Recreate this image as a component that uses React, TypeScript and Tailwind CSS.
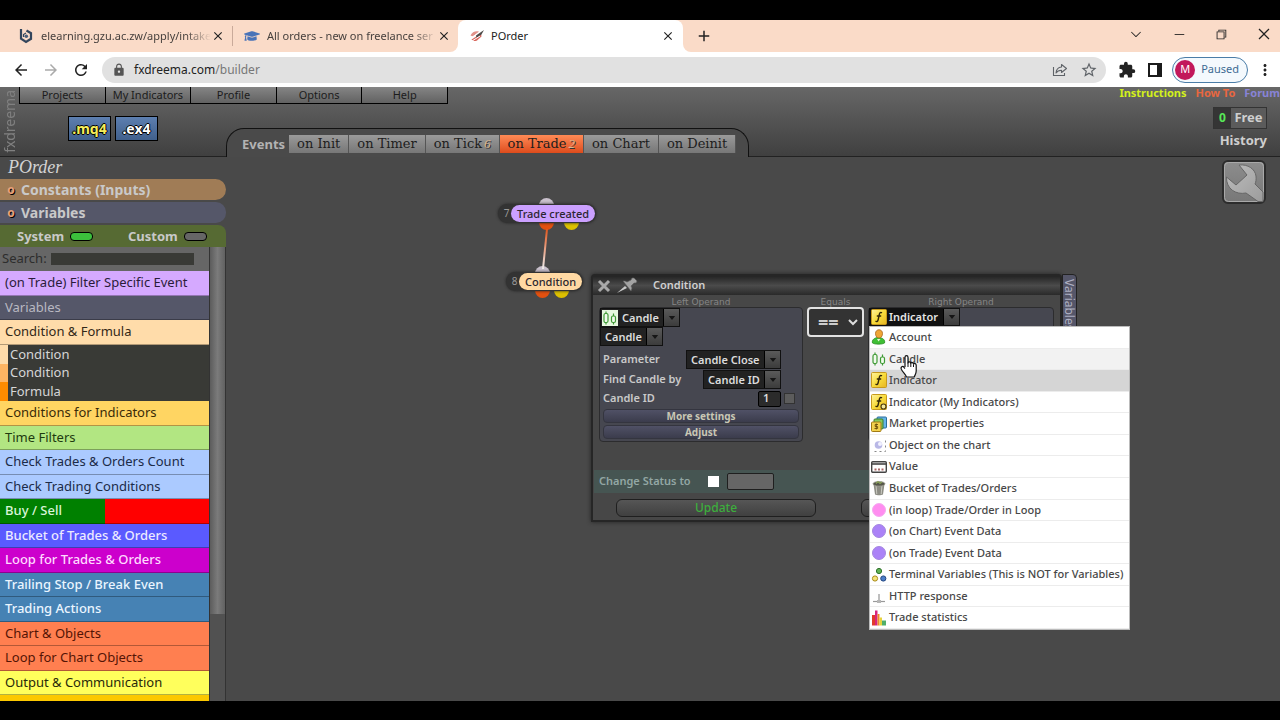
import type { ReactNode } from "react";
import { FaGraduationCap } from "react-icons/fa";
import {
  MdArrowBack,
  MdArrowForward,
  MdClose,
  MdExtension,
  MdLock,
  MdMoreVert,
  MdRefresh,
  MdStarBorder,
  MdAdd,
} from "react-icons/md";
import { VscChevronDown, VscChromeClose, VscChromeMinimize, VscChromeRestore } from "react-icons/vsc";

/* ---------- Icons ---------- */

function MoodleIcon() {
  return (
    <svg viewBox="0 0 16 16" className="size-4 shrink-0">
      <path d="M3 1v9.700L8 14l5-3.200V5.200L8.500 2.500" fill="none" stroke="#33455c" strokeWidth="2.200" />
      <path d="M5.500 9V6.500L8 5" fill="none" stroke="#33455c" strokeWidth="1.200" />
      <circle cx="8.300" cy="8.300" r="1.800" fill="#4a5f7a" />
    </svg>
  );
}

function OrderIcon() {
  return (
    <svg viewBox="0 0 16 16" className="size-4 shrink-0">
      <path d="M1.500 7.500C3 3.500 7 2.500 10 3.500L4 8.500z" fill="#e2928a" />
      <path d="M2.500 11.500 12 5.500l.5 3-4.500 4c-2 1-4 .500-5.500-1z" fill="#d9695f" />
      <path d="M7 7.500 15 2l-2.500 4.500-5 3.500z" fill="#4d4a48" />
      <path d="M2.500 9.500l6-4M3 13l8-5" stroke="#fff" strokeWidth="1" />
    </svg>
  );
}

function ShareIcon() {
  return (
    <svg viewBox="0 0 16 16" className="size-4" fill="none" stroke="#5f6368" strokeWidth="1.100">
      <path d="M1.500 5v8.500h11V11" />
      <path d="M9.500 2.500 14.500 6.500l-5 4V8.200C7 8.200 5.200 9 4 11c.3-3.500 2.200-5.700 5.500-6z" strokeLinejoin="round" />
    </svg>
  );
}

function SidePanelIcon() {
  return (
    <svg viewBox="0 0 14 14" className="size-3.5">
      <path d="M0 0h14v14H0zM2 2v10h7V2z" fill="#1b1b1b" fillRule="evenodd" />
    </svg>
  );
}

function WrenchIcon() {
  return (
    <svg viewBox="0 0 44 44" className="size-11">
      <defs>
        <linearGradient id="wrench-bg" x1="0" y1="0" x2="0" y2="1">
          <stop offset="0" stopColor="#8d8d8d" />
          <stop offset="1" stopColor="#777" />
        </linearGradient>
        <linearGradient id="wrench-fg" x1="0" y1="0" x2="1" y2="1">
          <stop offset="0" stopColor="#bdbdbd" />
          <stop offset="1" stopColor="#9c9c9c" />
        </linearGradient>
      </defs>
      <rect x="1" y="1" width="42" height="42" rx="5" fill="url(#wrench-bg)" stroke="#2c2c2c" strokeWidth="2" />
      <rect x="2.500" y="2.500" width="39" height="39" rx="4" fill="none" stroke="#a9a9a9" />
      <path
        d="M17 5c9-1 16 4 17 11 .3 3 0 6-1 8l8 8v9.500h-5L24 33C14 35 4 29 4.500 17L14 25l11-10z"
        fill="url(#wrench-fg)"
        stroke="#666"
        strokeWidth="1"
        strokeLinejoin="round"
      />
    </svg>
  );
}

function PinIcon() {
  return (
    <svg viewBox="0 0 22 18" className="h-[18px] w-[22px]">
      <path d="M1 16 9 9l2 2z" fill="#c9c9c9" />
      <path d="m7 4 8 10 1-3-1-2 3-3 2 0 1-2-3-3-2 0-1 2-4 2-2-1z" fill="#a3a3a3" stroke="#5d5d5d" strokeWidth=".6" />
    </svg>
  );
}

function HandCursor() {
  return (
    <svg viewBox="0 0 18 24" className="h-6 w-[18px]">
      <path
        d="M5 13V3.200C5 1 8 1 8 3.200V9c.3-1.600 2.800-1.400 2.800.4.500-1.300 2.700-1 2.700.7.600-1 2.700-.7 2.700 1.100V17c0 3-1.500 4.500-2 6H6.500C6 20.500 3 18.500 1.300 15.200.4 13 2.700 11.600 4 13.300L5 14.500"
        fill="#fff"
        stroke="#111"
        strokeWidth="1.200"
        strokeLinejoin="round"
      />
      <path d="M8 8.500V13M10.800 9.500V13M13.500 10.500V13" stroke="#111" strokeWidth="1" />
    </svg>
  );
}

function CandleIcon() {
  return (
    <svg viewBox="0 0 16 16" className="size-4 shrink-0" fill="#f0fbec" stroke="#3f9a35" strokeWidth="1.200">
      <path d="M4 1.500v13M11.500 3.500v11" />
      <rect x="2" y="3.500" width="4" height="9" rx="1.500" />
      <rect x="9.500" y="6" width="4" height="6.500" rx="1.500" />
    </svg>
  );
}

function FunctionIcon({ ring }: { ring?: boolean }) {
  return (
    <svg viewBox="0 0 16 16" className="size-4 shrink-0">
      <defs>
        <linearGradient id="fn-bg" x1="0" y1="0" x2="1" y2="1">
          <stop offset="0" stopColor="#fff3a0" />
          <stop offset=".5" stopColor="#f8dc3c" />
          <stop offset="1" stopColor="#e6b422" />
        </linearGradient>
      </defs>
      <rect x=".5" y=".5" width="15" height="15" rx="1" fill="url(#fn-bg)" stroke="#c79a1c" />
      <path d="M11 3.800C9.200 2.600 8.600 4 8.200 6l-1 4.500c-.4 1.900-1.200 2.600-2.700 1.700M5.800 7h4.400" fill="none" stroke="#33290a" strokeWidth="1.400" />
      {ring && <circle cx="12.500" cy="12.500" r="2.500" fill="#f3e79a" stroke="#4a3c10" strokeWidth="1.200" />}
    </svg>
  );
}

function AccountIcon() {
  return (
    <svg viewBox="0 0 16 16" className="size-4 shrink-0">
      <path d="M1.500 14c-1-3 2-5.500 6-5.500s7 2.500 6 5.500c-2 1.500-10 1.500-12 0z" fill="#3fbf35" stroke="#248a1e" strokeWidth=".8" />
      <path d="M4.500 4.500c0-5 7-5 7 0 0 6-7 6-7 0z" fill="#f0a637" stroke="#a8641b" strokeWidth=".8" />
      <path d="M6 10 7.500 12.500 9.500 10z" fill="#e8f7d8" />
    </svg>
  );
}

function MarketIcon() {
  return (
    <svg viewBox="0 0 16 16" className="size-4 shrink-0">
      <rect x="6" y="1" width="9.500" height="11" rx="1" fill="#65b5e8" stroke="#2a6d9c" />
      <rect x="3" y="3" width="9" height="10" rx="1" fill="#86c95c" stroke="#3c7e2c" />
      <rect x=".5" y="6" width="9.500" height="9.500" rx="1" fill="#f3d24d" stroke="#a17a14" />
      <path d="M7 8.500H4.200v2h2.400v2H3.500M5.300 7.500v6" fill="none" stroke="#6b4d0a" strokeWidth=".9" />
    </svg>
  );
}

function ObjectIcon() {
  return (
    <svg viewBox="0 0 16 16" className="size-4 shrink-0">
      <circle cx="7.500" cy="8" r="3.800" fill="#b9b8e6" />
      <circle cx="9" cy="7" r="2" fill="#f3f2ff" />
      <path d="M3.500 14.500h11v-12" fill="none" stroke="#888" strokeWidth="1" strokeDasharray="2 3" />
    </svg>
  );
}

function ValueIcon() {
  return (
    <svg viewBox="0 0 16 16" className="size-4 shrink-0">
      <rect x=".7" y="2.700" width="14.600" height="10.600" rx="1" fill="#fff" stroke="#444" strokeWidth="1.400" />
      <path d="M1 5h14" stroke="#444" strokeWidth="1.600" />
      <path d="M3.500 10.500h2M7 10.500h2M10.500 10.500h2" stroke="#a66" strokeWidth="2" />
    </svg>
  );
}

function BucketIcon() {
  return (
    <svg viewBox="0 0 16 16" className="size-4 shrink-0">
      <path d="M2.500 4h11L12 14.500c-2 1-6 1-8 0z" fill="#8d8d84" />
      <path d="M5 5l.8 9M11 5l-.8 9" stroke="#c9c9c0" strokeWidth="1" />
      <ellipse cx="8" cy="3.800" rx="6" ry="2.300" fill="#55564a" stroke="#9a9a90" strokeWidth=".8" />
      <path d="M5 3.500 7 1.500l2 2 2-1.500" fill="none" stroke="#8ba45a" strokeWidth="1.200" />
    </svg>
  );
}

function PinkDot() {
  return (
    <svg viewBox="0 0 16 16" className="size-4 shrink-0">
      <circle cx="8" cy="8" r="6.500" fill="#ff8df0" stroke="#f5aaf0" />
    </svg>
  );
}

function VioletDot() {
  return (
    <svg viewBox="0 0 16 16" className="size-4 shrink-0">
      <circle cx="8" cy="8" r="6.500" fill="#ab82f7" stroke="#a487e0" />
    </svg>
  );
}

function TerminalIcon() {
  return (
    <svg viewBox="0 0 16 16" className="size-4 shrink-0">
      <circle cx="8" cy="4" r="2.600" fill="#63b457" stroke="#2c6f27" />
      <circle cx="4" cy="11.500" r="2.600" fill="#f5e47a" stroke="#a98b1b" />
      <circle cx="12.300" cy="11.500" r="2.600" fill="#4c7dc9" stroke="#234780" />
    </svg>
  );
}

function HttpIcon() {
  return (
    <svg viewBox="0 0 16 16" className="size-4 shrink-0">
      <path d="M8 6v6" stroke="#aaa" strokeWidth="1.500" />
      <path d="M2 13.500h12" stroke="#999" strokeWidth="1.200" />
      <path d="M6 12h4v3H6z" fill="#b5b5b5" />
    </svg>
  );
}

function StatisticsIcon() {
  return (
    <svg viewBox="0 0 16 16" className="size-4 shrink-0">
      <path d="M1 5h3v10.500H1z" fill="#e03a2c" />
      <path d="M4 .500h2.500v15H4z" fill="#d7257f" />
      <path d="M6.500 4h2v11.500h-2z" fill="#f0892b" />
      <path d="M8.500 7.500h2.500v8H8.500z" fill="#e7d23c" />
      <path d="M11 10.500h4v5h-4z" fill="#4fae6a" />
    </svg>
  );
}

/* ---------- Browser frame ---------- */

const iconButton = "grid place-items-center";

function BrowserTab({ icon, title }: { icon: ReactNode; title: string }) {
  return (
    <div className="flex h-full w-[225px] items-center pr-[7px] pl-[11px] text-[11px]">
      {icon}
      <span className="ml-[7px] flex-1 overflow-hidden whitespace-nowrap text-[#453f3c] [mask-image:linear-gradient(to_right,black_85%,transparent)]">
        {title}
      </span>
      <button aria-label={`Close ${title}`} className={iconButton}>
        <MdClose className="size-3.5" />
      </button>
    </div>
  );
}

function BrowserChrome() {
  return (
    <div className="shrink-0 bg-white text-[#222]">
      <div className="flex h-8">
        <div className="flex items-center rounded-br-lg bg-[#fadbc8] pl-[7px]">
          <BrowserTab icon={<MoodleIcon />} title="elearning.gzu.ac.zw/apply/intake" />
          <span className="h-5 w-px bg-[#c9aa9a]" />
          <BrowserTab icon={<FaGraduationCap className="size-4 shrink-0 text-[#4973b8]" />} title="All orders - new on freelance ser" />
        </div>
        <div className="bg-[linear-gradient(to_bottom,#fadbc8_50%,white_50%)]">
          <div className="h-full rounded-t-lg bg-white">
            <div className="flex h-full w-[225px] items-center gap-[6px] pr-2 pl-[11px] text-[11px]">
              <OrderIcon />
              <span className="flex-1">POrder</span>
              <button aria-label="Close POrder" className={iconButton}>
                <MdClose className="size-3.5" />
              </button>
            </div>
          </div>
        </div>
        <div className="flex flex-1 items-center rounded-bl-lg bg-[#fadbc8] pl-3">
          <button aria-label="New tab" className={iconButton}>
            <MdAdd className="size-[18px]" />
          </button>
          <div className="ml-auto flex items-center gap-7 pr-2 pb-1">
            <button aria-label="Search tabs" className={iconButton}>
              <VscChevronDown className="size-4" />
            </button>
            <button aria-label="Minimize" className={iconButton}>
              <VscChromeMinimize className="size-3.5" />
            </button>
            <button aria-label="Restore" className={iconButton}>
              <VscChromeRestore className="size-3.5" />
            </button>
            <button aria-label="Close window" className={iconButton}>
              <VscChromeClose className="size-4" />
            </button>
          </div>
        </div>
      </div>
      <div className="flex h-[35px] items-center pr-[6px] pl-3">
        <div className="flex w-[90px] gap-3">
          <button aria-label="Back" className={iconButton}>
            <MdArrowBack className="size-[18px]" />
          </button>
          <button aria-label="Forward" className={iconButton}>
            <MdArrowForward className="size-[18px] text-[#aaa]" />
          </button>
          <button aria-label="Reload" className={iconButton}>
            <MdRefresh className="size-[18px]" />
          </button>
        </div>
        <div className="flex h-[26px] flex-1 items-center rounded-full bg-[#e1e1e1] pr-2 pl-[10px]">
          <MdLock className="size-3.5 text-[#555]" />
          <span className="ml-2 text-[12px]">
            fxdreema.com<span className="text-[#777]">/builder</span>
          </span>
          <div className="ml-auto flex items-center gap-3">
            <button aria-label="Share" className={iconButton}>
              <ShareIcon />
            </button>
            <button aria-label="Bookmark" className={iconButton}>
              <MdStarBorder className="size-[18px] text-[#5f6368]" />
            </button>
          </div>
        </div>
        <div className="ml-3 flex items-center gap-3">
          <button aria-label="Extensions" className={iconButton}>
            <MdExtension className="size-[18px]" />
          </button>
          <button aria-label="Side panel" className={iconButton}>
            <SidePanelIcon />
          </button>
          <button className="-ml-0.5 flex h-[26px] items-center gap-[6px] rounded-full border border-[#4a7da8] bg-[#f4f9fd] pr-2 pl-[2px] text-[11px] text-[#3d6b94]">
            <span className="grid size-5 place-items-center rounded-full bg-[#c2185b] text-[11px] text-white">M</span>
            Paused
          </button>
          <button aria-label="Menu" className="-ml-1 grid place-items-center">
            <MdMoreVert className="size-[18px]" />
          </button>
        </div>
      </div>
    </div>
  );
}

/* ---------- Application header ---------- */

const menus = ["Projects", "My Indicators", "Profile", "Options", "Help"];

const eventTabs: { label: string; count?: number; active?: boolean }[] = [
  { label: "on Init" },
  { label: "on Timer" },
  { label: "on Tick", count: 6 },
  { label: "on Trade", count: 2, active: true },
  { label: "on Chart" },
  { label: "on Deinit" },
];

const outline = "[text-shadow:-1px_0_#000,1px_0_#000,0_-1px_#000,0_1px_#000]";

function Header() {
  return (
    <header className="flex h-[70px] shrink-0 border-b border-[#222] bg-linear-to-b from-[#676767] to-[#404040]">
      <div className="flex w-[19px] items-center justify-center overflow-hidden text-[14px] text-[#808080]">
        <span className="rotate-180 [writing-mode:vertical-rl]">fxdreema</span>
      </div>
      <div className="flex min-w-0 flex-1 flex-col">
        <div className="flex h-[17px] justify-between">
          <nav className="flex w-[429px] border-l border-black">
            {menus.map((label) => (
              <button
                key={label}
                className="flex-1 border-r border-b border-black bg-linear-to-b from-[#858585] to-[#626262] text-[11px] leading-4 whitespace-nowrap text-[#1c1c1c]"
              >
                {label}
              </button>
            ))}
          </nav>
          <div className="flex gap-[9px] text-[11px] leading-3 font-bold">
            <a href="#instructions" className="text-[#d3f01c]">Instructions</a>
            <a href="#how-to" className="text-[#e8673f]">How To</a>
            <a href="#forum" className="text-[#8883d6]">Forum</a>
          </div>
        </div>
        <div className="flex flex-1 justify-between">
          <div className="flex">
            <div className="flex w-[207px] gap-1 pt-[12px] pl-[49px] text-[14px] leading-[22px] font-bold">
              <button className={`h-[25px] w-[43px] border border-black bg-linear-to-b from-[#5d7fb0] to-[#41608c] text-[#f7ee5a] ${outline}`}>
                .mq4
              </button>
              <button className={`h-[25px] w-[43px] border border-black bg-linear-to-b from-[#5d7fb0] to-[#41608c] text-white ${outline}`}>
                .ex4
              </button>
            </div>
            <div className="-mb-px flex items-center self-end rounded-t-[18px] border-x border-t border-[#111] bg-[#4a4a4a] pt-[5px] pr-3 pb-[3px] pl-[15px]">
              <span className="mr-1 text-[13px] leading-5 font-bold text-[#b3b3b3]">Events</span>
              {eventTabs.map((tab) => (
                <button
                  key={tab.label}
                  className={`h-[18px] border-r border-[#555] px-2 font-['DejaVu_Serif',serif] text-[13px] leading-[18px] text-[#1d1d1d] ${
                    tab.active ? "bg-linear-to-b from-[#ff8a55] to-[#dd4b1b]" : "bg-linear-to-b from-[#9a9a9a] to-[#777]"
                  }`}
                >
                  {tab.label}
                  {tab.count && (
                    <i className="ml-[2px] font-['Liberation_Serif',serif] text-[13px] text-[#d8b590] [text-shadow:1px_1px_#333]">{tab.count}</i>
                  )}
                </button>
              ))}
            </div>
          </div>
          <div className="flex flex-col items-end pr-[13px] text-[13px] font-bold text-[#cfcfcf]">
            <div className="mt-[3px] flex h-[22px] w-[54px] items-center border border-[#333] bg-[#5b5b5b]">
              <span className="grid h-full w-[17px] place-items-center bg-[#353535] text-[12px] text-[#58e858]">0</span>
              <span className="flex-1 text-center">Free</span>
            </div>
            <a href="#history" className="leading-[22px]">History</a>
          </div>
        </div>
      </div>
    </header>
  );
}

/* ---------- Sidebar ---------- */

const topCategories = [
  { label: "(on Trade) Filter Specific Event", style: "bg-[#d5a9ff] text-[#2a1c3a]" },
  { label: "Variables", style: "bg-[#555769] text-[#b9b9c2]" },
  { label: "Condition & Formula", style: "bg-[#ffdcaa] text-[#332818]" },
];

const conditionBlocks = [
  { id: "condition", label: "Condition", swatch: "bg-[#ffdcaa]" },
  { id: "condition-2", label: "Condition", swatch: "bg-[#ffb562]" },
  { id: "formula", label: "Formula", swatch: "bg-[#ff8c00]" },
];

const categories = [
  { label: "Conditions for Indicators", style: "bg-[#ffd562] text-[#3a2b08]" },
  { label: "Time Filters", style: "bg-[#b2e682] text-[#1e3a10]" },
  { label: "Check Trades & Orders Count", style: "bg-[#abcaff] text-[#1b2b48]" },
  { label: "Check Trading Conditions", style: "bg-[#abcaff] text-[#1b2b48]" },
  { label: "Buy / Sell", style: "bg-linear-to-r from-[#008000] from-50% to-[#ff0000] to-50% text-[#d9f5d9] font-medium" },
  { label: "Bucket of Trades & Orders", style: "bg-[#5a5aff] text-[#eceaff] font-medium" },
  { label: "Loop for Trades & Orders", style: "bg-[#cc00cc] text-[#ffd9ff] font-medium" },
  { label: "Trailing Stop / Break Even", style: "bg-[#4682b4] text-[#eaf5ff] font-medium" },
  { label: "Trading Actions", style: "bg-[#4682b4] text-[#eaf5ff] font-medium" },
  { label: "Chart & Objects", style: "bg-[#ff7f50] text-[#541405]" },
  { label: "Loop for Chart Objects", style: "bg-[#ff7f50] text-[#541405]" },
  { label: "Output & Communication", style: "bg-[#ffff5c] text-[#29290a]" },
];

function CategoryRow({ label, style }: { label: string; style: string }) {
  return (
    <button className={`flex w-full items-center overflow-hidden border-b border-black/30 px-[5px] text-left whitespace-nowrap ${style}`}>
      {label}
    </button>
  );
}

function ZeroCount() {
  return <span className="w-2 text-[12px] text-[#e8a27c] [text-shadow:1px_1px_#000]">o</span>;
}

function Sidebar() {
  return (
    <aside className="flex w-[226px] shrink-0 flex-col overflow-hidden">
      <h1 className="h-[22px] shrink-0 pl-2 font-['Liberation_Serif',serif] text-[18px] leading-5 text-[#d3d3d3] italic">POrder</h1>
      <div className="flex shrink-0 flex-col gap-[2px] text-[14px] leading-5 font-bold text-[#c9c9c9]">
        <button className="flex h-[21px] items-center gap-[6px] rounded-r-full bg-[#a07c56] pl-[7px]">
          <ZeroCount />
          Constants (Inputs)
        </button>
        <button className="flex h-[21px] items-center gap-[6px] rounded-r-[10px] bg-[#555769] pl-[7px]">
          <ZeroCount />
          Variables
        </button>
        <div className="flex h-[22px] items-center rounded-tr-lg bg-[#566a33] pl-[17px] text-[13px]">
          <button className="flex w-[111px] items-center gap-[6px]">
            System
            <span className="h-[9px] w-[23px] rounded border border-black bg-[#3cc03c]" />
          </button>
          <button className="flex items-center gap-[6px]">
            Custom
            <span className="h-[9px] w-[23px] rounded border border-black bg-[#666]" />
          </button>
        </div>
      </div>
      <div className="flex min-h-0 flex-1 border-r border-[#333]">
        <div className="w-[209px] overflow-hidden bg-[#666] text-[13px]">
          <div className="flex h-[24px] items-center gap-1 pl-[2px] text-[#2d2d2d]">
            <label htmlFor="search">Search:</label>
            <input id="search" type="text" className="h-3 w-[143px] bg-[#393a36] text-white" />
          </div>
          <div className="grid h-[74px] auto-rows-fr">
            {topCategories.map((row) => (
              <CategoryRow key={row.label} {...row} />
            ))}
          </div>
          <div className="grid h-[56px] auto-rows-fr bg-[#393a36] text-[#d6d6d6]">
            {conditionBlocks.map((row) => (
              <button key={row.id} className="flex min-h-0 items-center gap-[2px] text-left">
                <span className={`h-full w-2 ${row.swatch}`} />
                {row.label}
              </button>
            ))}
          </div>
          <div className="grid h-[294px] auto-rows-fr">
            {categories.map((row) => (
              <CategoryRow key={row.label} {...row} />
            ))}
          </div>
          <div className="h-6 bg-[#fcc800]" />
        </div>
        <div className="flex-1 border-l border-[#333] bg-[#515151]">
          <div className="h-[367px] bg-linear-to-r from-[#5c5c5c] via-[#7b7b7b] to-[#616161]" />
        </div>
      </div>
    </aside>
  );
}

/* ---------- Canvas ---------- */

function Port({ className }: { className: string }) {
  return <span className={`absolute size-[15px] rounded-full ${className}`} />;
}

function FlowNode({ id, label, color }: { id: number; label: string; color: string }) {
  return (
    <div className="relative flex h-[19px] items-center rounded-full bg-[#333] pr-px pl-1 text-[11px] shadow-[0_0_3px_#222]">
      <span className="w-[9px] text-center text-[10px] text-[#999]">{id}</span>
      <span className={`rounded-full px-[6px] leading-[17px] font-medium whitespace-nowrap text-[#2c2630] ${color}`}>{label}</span>
    </div>
  );
}

function Caret() {
  return (
    <span className="pointer-events-none z-10 grid h-full w-4 place-items-center border-l border-black bg-linear-to-b from-[#5a5a5a] to-[#3c3c3c]">
      <svg viewBox="0 0 8 5" className="h-1 w-2">
        <path d="M0 0h8L4 5z" fill="#161616" />
      </svg>
    </span>
  );
}

function DarkSelect({ label, value, icon, id }: { label?: string; value: string; icon?: ReactNode; id?: string }) {
  return (
    <span className="flex h-[19px] items-center border border-[#111] bg-[#222]">
      {icon && <span className="ml-px bg-[#e6f8df]">{icon}</span>}
      <select id={id} aria-label={label} className="appearance-none bg-transparent px-1 text-[11px] leading-[17px] font-semibold text-[#dcdcdc]">
        <option>{value}</option>
      </select>
      <Caret />
    </span>
  );
}

function OperandTitle({ children }: { children: string }) {
  return <div className="h-3 text-center font-['DejaVu_Sans',sans-serif] text-[9px] leading-[14px] text-[#858585]">{children}</div>;
}

function BarButton({ children }: { children: string }) {
  return (
    <button className="h-[14px] rounded border border-[#34353f] bg-linear-to-b from-[#505166] to-[#3b3c4c] text-[10px] leading-3 font-bold text-[#c9c6b4]">
      {children}
    </button>
  );
}

function LeftOperand() {
  return (
    <div className="flex w-[204px] flex-col items-start rounded-sm border border-[#2c2c2e] bg-[#464750] pb-[2px] text-[11px] font-semibold text-[#c9c9c9]">
      <DarkSelect label="Left operand type" value="Candle" icon={<CandleIcon />} />
      <DarkSelect label="Candle mode" value="Candle" />
      <div className="flex flex-col gap-px self-stretch px-[3px] pt-1">
        <div className="flex h-[19px] items-center justify-between pr-[18px]">
          <label htmlFor="parameter">Parameter</label>
          <DarkSelect id="parameter" value="Candle Close" />
        </div>
        <div className="flex h-[19px] items-center justify-between pr-[18px]">
          <label htmlFor="find-by">Find Candle by</label>
          <DarkSelect id="find-by" value="Candle ID" />
        </div>
        <div className="flex h-[17px] items-center">
          <label htmlFor="candle-id" className="flex-1">Candle ID</label>
          <input
            id="candle-id"
            type="text"
            defaultValue="1"
            className="mr-[3px] h-[16px] w-[23px] rounded-xs border border-black bg-[#2b2b2b] pl-1 text-[#ddd]"
          />
          <input type="checkbox" aria-label="Use Candle ID" className="mr-1 size-[11px] appearance-none border border-[#333] bg-[#5c5c5c]" />
        </div>
        <div className="flex flex-col gap-[2px] pt-px">
          <BarButton>More settings</BarButton>
          <BarButton>Adjust</BarButton>
        </div>
      </div>
    </div>
  );
}

const operandTypes: { label: string; icon: ReactNode; style?: string }[] = [
  { label: "Account", icon: <AccountIcon /> },
  { label: "Candle", icon: <CandleIcon />, style: "bg-[#f2f2f2]" },
  { label: "Indicator", icon: <FunctionIcon />, style: "bg-[#d5d5d5]" },
  { label: "Indicator (My Indicators)", icon: <FunctionIcon ring /> },
  { label: "Market properties", icon: <MarketIcon /> },
  { label: "Object on the chart", icon: <ObjectIcon /> },
  { label: "Value", icon: <ValueIcon /> },
  { label: "Bucket of Trades/Orders", icon: <BucketIcon /> },
  { label: "(in loop) Trade/Order in Loop", icon: <PinkDot /> },
  { label: "(on Chart) Event Data", icon: <VioletDot /> },
  { label: "(on Trade) Event Data", icon: <VioletDot /> },
  { label: "Terminal Variables (This is NOT for Variables)", icon: <TerminalIcon /> },
  { label: "HTTP response", icon: <HttpIcon /> },
  { label: "Trade statistics", icon: <StatisticsIcon /> },
];

function OperandMenu() {
  return (
    <ul
      role="menu"
      className="absolute top-full left-0 z-20 grid h-[304px] w-[261px] auto-rows-fr grid-cols-1 border border-[#bbb] bg-white text-[11px] font-medium text-[#484848]"
    >
      {operandTypes.map((item) => (
        <li key={item.label} role="none" className="min-h-0">
          <button
            role="menuitem"
            className={`flex h-full w-full items-center gap-[2px] border-b border-[#ececec] pl-px whitespace-nowrap ${item.style ?? ""}`}
          >
            {item.icon}
            {item.label}
          </button>
        </li>
      ))}
    </ul>
  );
}

const footerButton =
  "h-[18px] rounded-md border border-[#1f1f1f] bg-linear-to-b from-[#565656] to-[#404040] text-[12px] leading-4 font-medium text-[#3dae3d]";

function ConditionDialog() {
  return (
    <section aria-label="Condition" className="absolute top-[117px] left-[365px] flex items-start">
      <div className="w-[471px] rounded-t border-2 border-[#262626] bg-[#474747] pb-[3px] shadow-[0_0_4px_#222]">
        <div className="flex h-[19px] items-center bg-linear-to-b from-[#242424] via-[#4b4b4b] to-[#2a2a2a] pl-1 text-[11px] text-[#d0d0d0]">
          <button aria-label="Close" className={iconButton}>
            <svg viewBox="0 0 14 14" className="size-3.5">
              <path d="M2 2l10 10M12 2 2 12" stroke="#a9a9a9" strokeWidth="3" />
            </svg>
          </button>
          <button aria-label="Pin" className="ml-[5px] grid place-items-center">
            <PinIcon />
          </button>
          <h2 className="ml-[15px] font-semibold">Condition</h2>
        </div>
        <div className="flex gap-1 px-[6px]">
          <div>
            <OperandTitle>Left Operand</OperandTitle>
            <LeftOperand />
          </div>
          <div className="w-[57px]">
            <OperandTitle>Equals</OperandTitle>
            <div className="grid h-[30px] items-center rounded-[4px] border-2 border-[#e2e2e2] bg-[#333]">
              <select aria-label="Comparison" className="col-start-1 row-start-1 h-full appearance-none bg-transparent pl-[9px] text-[18px] leading-5 font-bold text-[#ccc]">
                <option>==</option>
              </select>
              <svg viewBox="0 0 10 7" className="pointer-events-none col-start-1 row-start-1 mr-1 h-[7px] w-[10px] justify-self-end">
                <path d="m1 1 4 4 4-4" fill="none" stroke="#ddd" strokeWidth="2" />
              </svg>
            </div>
          </div>
          <div className="flex-1 self-stretch">
            <OperandTitle>Right Operand</OperandTitle>
            <div className="h-[135px] rounded-sm border border-[#2c2c2e] bg-[#464750]">
              <div className="relative w-fit">
                <button
                  aria-expanded="true"
                  aria-haspopup="menu"
                  className="flex h-[18px] items-center gap-[2px] border border-[#111] bg-[#111] pl-px text-[11px] font-semibold text-[#e4e4e4]"
                >
                  <FunctionIcon />
                  <span className="pr-[3px]">Indicator</span>
                  <Caret />
                </button>
                <OperandMenu />
              </div>
            </div>
          </div>
        </div>
        <div className="mx-px mt-7 flex h-[23px] items-center bg-[#465552] pl-[5px] text-[11px] font-semibold text-[#93a7a4]">
          <label htmlFor="change-status">Change Status to</label>
          <input id="change-status" type="checkbox" className="ml-[17px] size-[11px] appearance-none bg-white" />
          <input type="text" aria-label="Status" className="ml-2 h-[17px] w-[47px] rounded-xs border border-[#1f1f1f] bg-[#666]" />
        </div>
        <div className="mt-[6px] flex gap-[45px] px-[23px]">
          <button className={`w-[200px] ${footerButton}`}>Update</button>
          <button aria-label="Cancel" className={`flex-1 ${footerButton}`} />
        </div>
      </div>
      <button className="h-[100px] w-[15px] rounded-r border border-[#222] bg-[#555669] pt-1 text-left text-[12px] leading-[13px] text-[#aeb0c2] [writing-mode:vertical-rl]">
        Variables
      </button>
    </section>
  );
}

function Canvas() {
  return (
    <main className="relative min-w-0 flex-1 overflow-hidden">
      <div className="flex justify-end pt-[3px] pr-[14px]">
        <button aria-label="Settings">
          <WrenchIcon />
        </button>
      </div>

      <Port className="top-[41px] left-[313px] bg-[#c9c0cc]" />
      <Port className="top-[58px] left-[313px] bg-[#e2500f]" />
      <Port className="top-[58px] left-[338px] bg-[#dcc000]" />
      <Port className="top-[109px] left-[309px] bg-[#c9c0cc]" />
      <Port className="top-[126px] left-[309px] bg-[#e2500f]" />
      <Port className="top-[126px] left-[328px] bg-[#dcc000]" />
      <svg viewBox="0 0 10 40" className="absolute top-[72px] left-[314px] h-10 w-[10px]">
        <defs>
          <linearGradient id="link" x1="0" y1="0" x2="0" y2="1">
            <stop offset="0" stopColor="#e2561c" />
            <stop offset="1" stopColor="#eee" />
          </linearGradient>
        </defs>
        <path d="M7 0 3 40" stroke="url(#link)" strokeWidth="2" />
      </svg>
      <div className="absolute top-[47px] left-[272px]">
        <FlowNode id={7} label="Trade created" color="bg-[#cba0ff]" />
      </div>
      <div className="absolute top-[115px] left-[280px]">
        <FlowNode id={8} label="Condition" color="bg-[#ffd9a3]" />
      </div>

      <ConditionDialog />
      <span className="pointer-events-none absolute top-[197px] left-[674px] z-30">
        <HandCursor />
      </span>
    </main>
  );
}

export default function App() {
  return (
    <div className="flex h-screen flex-col bg-black pt-5 pb-[19px] font-['Noto_Sans','Open_Sans',sans-serif]">
      <BrowserChrome />
      <Header />
      <div className="flex min-h-0 flex-1 bg-[#494949]">
        <Sidebar />
        <Canvas />
      </div>
    </div>
  );
}
